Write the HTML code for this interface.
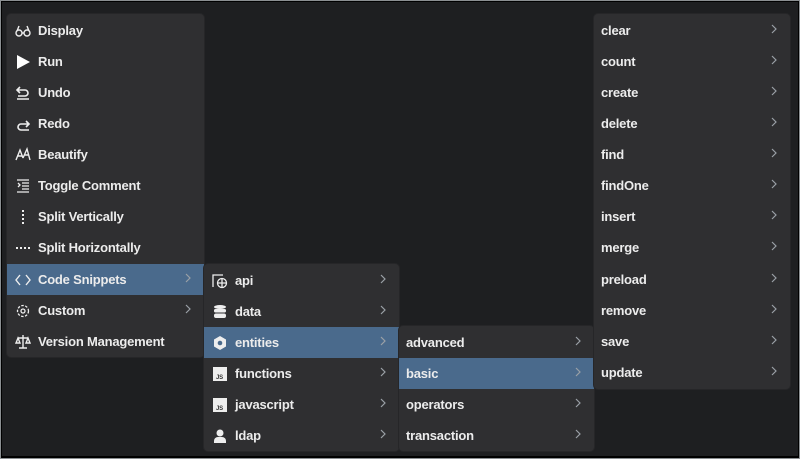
<!DOCTYPE html>
<html><head><meta charset="utf-8"><style>
*{margin:0;padding:0;box-sizing:border-box}
body{width:800px;height:459px;overflow:hidden;background:#8b8f92;font-family:"Liberation Sans",sans-serif}
.frame{position:absolute;left:1px;top:1px;width:798px;height:457px;background:#000}
.bg{position:absolute;left:2px;top:2px;width:796px;height:454px;background:#1e1f21}
.m{position:absolute;background:#2f2f31;border-radius:5px;border:1px solid #262628}
.it{position:absolute;left:0;right:0;height:31px;color:#ececec;font-size:13px;font-weight:bold;line-height:31px;letter-spacing:-0.2px}
.it.sel{background:#4a6a8c}
.it .t{position:absolute;left:31px}
.nt .t{left:7px}
.ch{position:absolute;right:13px;top:9px;width:6px;height:10px}
.ic{position:absolute;left:8px;top:8px;width:16px;height:16px}
</style></head><body>
<svg width="0" height="0" style="position:absolute"><defs><symbol id="c" viewBox="0 0 6 10"><path d="M1 1l4 4-4 4" fill="none" stroke="#9aa0a6" stroke-width="1.2"/></symbol></defs></svg>
<div class="frame"></div><div class="bg"></div>

<div class="m" style="left:6px;top:13px;width:199px;height:345px">
 <div class="it" style="top:1px"><svg class="ic" viewBox="0 0 16 16" fill="none" stroke="#eee" stroke-width="1.4"><circle cx="4" cy="10" r="3"/><circle cx="12" cy="10" r="3"/><path d="M7 10h2M2 8l2-5M14 8l-2-5"/></svg><span class="t">Display</span></div>
 <div class="it" style="top:32px"><svg class="ic" viewBox="0 0 16 16"><path d="M2 1l13 7-13 7z" fill="#fff"/></svg><span class="t">Run</span></div>
 <div class="it" style="top:63px"><svg class="ic" viewBox="0 0 16 16" fill="none" stroke="#eee" stroke-width="1.6"><path d="M5 2L2 5l3 3M2 5h8a3 3 0 010 6H3M2 14h12"/></svg><span class="t">Undo</span></div>
 <div class="it" style="top:94px"><svg class="ic" viewBox="0 0 16 16" fill="none" stroke="#eee" stroke-width="1.6"><path d="M11 5l3 3-3 3M14 8H6a3 3 0 000 6h8"/></svg><span class="t">Redo</span></div>
 <div class="it" style="top:125px"><svg class="ic" viewBox="0 0 16 16" fill="none" stroke="#eee" stroke-width="1.4"><path d="M1 13l4-10 3 8M2 9h5M8 11l4-9 3 11M9 8h5"/></svg><span class="t">Beautify</span></div>
 <div class="it" style="top:156px"><svg class="ic" viewBox="0 0 16 16" fill="none" stroke="#eee" stroke-width="1.3"><path d="M2 2h12M7 5h7M7 8h7M7 11h7M2 14h12M3 5l2 2-2 2"/></svg><span class="t">Toggle Comment</span></div>
 <div class="it" style="top:187px"><svg class="ic" viewBox="0 0 16 16" fill="#eee"><rect x="7" y="1" width="2" height="2"/><rect x="7" y="5" width="2" height="2"/><rect x="7" y="9" width="2" height="2"/><rect x="7" y="13" width="2" height="2"/></svg><span class="t">Split Vertically</span></div>
 <div class="it" style="top:218px"><svg class="ic" viewBox="0 0 16 16" fill="#eee"><rect x="1" y="7" width="2" height="2"/><rect x="5" y="7" width="2" height="2"/><rect x="9" y="7" width="2" height="2"/><rect x="13" y="7" width="2" height="2"/></svg><span class="t">Split Horizontally</span></div>
 <div class="it sel" style="top:250px"><svg class="ic" viewBox="0 0 16 16" fill="none" stroke="#eee" stroke-width="1.4"><path d="M5 3L1 8l4 5M11 3l4 5-4 5"/></svg><span class="t">Code Snippets</span><svg class="ch"><use href="#c"/></svg></div>
 <div class="it" style="top:281px"><svg class="ic" viewBox="0 0 16 16" fill="none" stroke="#eee" stroke-width="1.3"><circle cx="8" cy="8" r="5.5" stroke-dasharray="2.5 1.5"/><circle cx="8" cy="8" r="2"/></svg><span class="t">Custom</span><svg class="ch"><use href="#c"/></svg></div>
 <div class="it" style="top:312px"><svg class="ic" viewBox="0 0 16 16" fill="none" stroke="#eee" stroke-width="1.4"><path d="M8 1v13M3 4h10M4 14h8M3 4l-2 5h4zM13 4l-2 5h4z"/></svg><span class="t">Version Management</span></div>
</div>

<div class="m" style="left:203px;top:263px;width:197px;height:189px">
 <div class="it" style="top:1px"><svg class="ic" viewBox="0 0 16 16" fill="none" stroke="#eee" stroke-width="1.3"><path d="M1 14V2h10"/><circle cx="10" cy="10" r="4.5"/><path d="M5.5 10h9M10 5.5v9"/></svg><span class="t">api</span><svg class="ch"><use href="#c"/></svg></div>
 <div class="it" style="top:32px"><svg class="ic" viewBox="0 0 16 16" fill="#eee"><ellipse cx="8" cy="3" rx="6" ry="2"/><rect x="2" y="5" width="12" height="3.5" rx="1.5"/><rect x="2" y="9.5" width="12" height="4.5" rx="2"/></svg><span class="t">data</span><svg class="ch"><use href="#c"/></svg></div>
 <div class="it sel" style="top:63px"><svg class="ic" viewBox="0 0 16 16" fill="#eee"><path d="M8 1l6 3.5v7L8 15l-6-3.5v-7z"/><circle cx="8" cy="8" r="2.3" fill="#4a6a8c"/></svg><span class="t">entities</span><svg class="ch"><use href="#c"/></svg></div>
 <div class="it" style="top:94px"><svg class="ic" viewBox="0 0 16 16"><rect x="1" y="1" width="14" height="14" fill="#eee"/><text x="4" y="13" font-size="6" font-family="Liberation Sans" fill="#333">JS</text></svg><span class="t">functions</span><svg class="ch"><use href="#c"/></svg></div>
 <div class="it" style="top:125px"><svg class="ic" viewBox="0 0 16 16"><rect x="1" y="1" width="14" height="14" fill="#eee"/><text x="4" y="13" font-size="6" font-family="Liberation Sans" fill="#333">JS</text></svg><span class="t">javascript</span><svg class="ch"><use href="#c"/></svg></div>
 <div class="it" style="top:156px"><svg class="ic" viewBox="0 0 16 16" fill="#eee"><circle cx="8" cy="5" r="3.5"/><path d="M2 15v-2a4 4 0 014-4h4a4 4 0 014 4v2z"/></svg><span class="t">ldap</span><svg class="ch"><use href="#c"/></svg></div>
</div>

<div class="m nt" style="left:398px;top:325px;width:197px;height:127px">
 <div class="it" style="top:1px"><span class="t">advanced</span><svg class="ch"><use href="#c"/></svg></div>
 <div class="it sel" style="top:32px"><span class="t">basic</span><svg class="ch"><use href="#c"/></svg></div>
 <div class="it" style="top:63px"><span class="t">operators</span><svg class="ch"><use href="#c"/></svg></div>
 <div class="it" style="top:94px"><span class="t">transaction</span><svg class="ch"><use href="#c"/></svg></div>
</div>

<div class="m nt" style="left:593px;top:13px;width:198px;height:377px">
 <div class="it" style="top:1px"><span class="t">clear</span><svg class="ch"><use href="#c"/></svg></div>
 <div class="it" style="top:32px"><span class="t">count</span><svg class="ch"><use href="#c"/></svg></div>
 <div class="it" style="top:63px"><span class="t">create</span><svg class="ch"><use href="#c"/></svg></div>
 <div class="it" style="top:94px"><span class="t">delete</span><svg class="ch"><use href="#c"/></svg></div>
 <div class="it" style="top:125px"><span class="t">find</span><svg class="ch"><use href="#c"/></svg></div>
 <div class="it" style="top:156px"><span class="t">findOne</span><svg class="ch"><use href="#c"/></svg></div>
 <div class="it" style="top:187px"><span class="t">insert</span><svg class="ch"><use href="#c"/></svg></div>
 <div class="it" style="top:218px"><span class="t">merge</span><svg class="ch"><use href="#c"/></svg></div>
 <div class="it" style="top:250px"><span class="t">preload</span><svg class="ch"><use href="#c"/></svg></div>
 <div class="it" style="top:281px"><span class="t">remove</span><svg class="ch"><use href="#c"/></svg></div>
 <div class="it" style="top:312px"><span class="t">save</span><svg class="ch"><use href="#c"/></svg></div>
 <div class="it" style="top:343px"><span class="t">update</span><svg class="ch"><use href="#c"/></svg></div>
</div>
</body></html>
